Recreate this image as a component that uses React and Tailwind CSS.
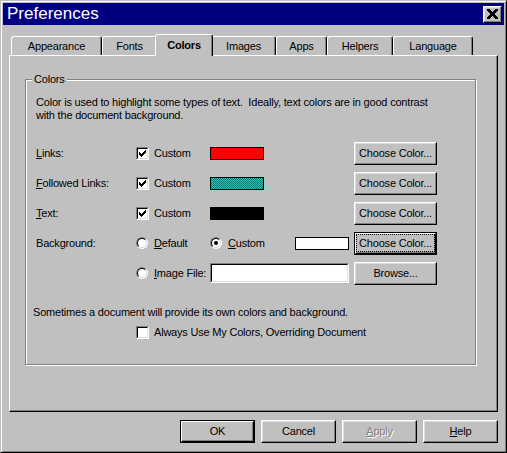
import React from "react";

const CHECK_PATH =
  "M7 1h1v1h-1zM6 2h2v1h-2zM1 3h1v1h-1zM5 3h3v1h-3zM1 4h2v1h-2zM4 4h3v1h-3zM1 5h5v1h-5zM2 6h3v1h-3zM3 7h1v1h-1z";

function Check({ checked }) {
  return (
    <span className="block w-[13px] h-[13px] shrink-0 border border-t-[#808080] border-l-[#808080] border-b-white border-r-white">
      <span className="block w-[11px] h-[11px] border border-t-black border-l-black border-b-[#dfdfdf] border-r-[#dfdfdf] bg-white">
        {checked && (
          <svg width="9" height="9" viewBox="0 0 9 9" className="block" shapeRendering="crispEdges">
            <path d={CHECK_PATH} fill="#000" />
          </svg>
        )}
      </span>
    </span>
  );
}

function Radio({ checked }) {
  return (
    <span className="block w-[12px] h-[12px] shrink-0 rounded-full border border-t-[#808080] border-l-[#808080] border-b-white border-r-white">
      <span className="flex items-center justify-center w-[10px] h-[10px] rounded-full border border-t-black border-l-black border-b-[#dfdfdf] border-r-[#dfdfdf] bg-white">
        {checked && <span className="block w-[4px] h-[4px] rounded-full bg-black" />}
      </span>
    </span>
  );
}

function Btn({ children, className = "", isDefault, focus, disabled }) {
  if (isDefault) {
    return (
      <div className={"h-[23px] shrink-0 border border-black " + className}>
        <span className="flex items-center justify-center w-full h-full border border-t-white border-l-white border-b-black border-r-black shadow-[inset_-1px_-1px_0_#808080]">
          <span
            className={
              focus
                ? "px-[1px] leading-[14px] outline outline-1 outline-dotted outline-black outline-offset-[1px]"
                : ""
            }
          >
            {children}
          </span>
        </span>
      </div>
    );
  }
  return (
    <div className={"h-[23px] shrink-0 " + className}>
      <span className="flex items-center justify-center w-full h-full border border-t-white border-l-white border-b-black border-r-black shadow-[inset_-1px_-1px_0_#808080,inset_1px_1px_0_#dfdfdf]">
        <span className={disabled ? "text-[#808080] [text-shadow:1px_1px_0_#fff]" : ""}>{children}</span>
      </span>
    </div>
  );
}

function Swatch({ children, className = "" }) {
  return <div className={"w-[54px] h-[13px] border border-black " + className}>{children}</div>;
}

function Tab({ label, active, w }) {
  if (active) {
    return (
      <div
        className={
          "relative z-10 -mx-[2px] -mb-px h-[22px] flex items-center justify-center font-bold bg-[#c0c0c0] border-l border-t border-white border-r border-r-black rounded-t-[3px] shadow-[inset_-1px_0_0_#808080] " +
          w
        }
      >
        {label}
      </div>
    );
  }
  return (
    <div
      className={
        "h-[19px] flex items-center justify-center bg-[#c0c0c0] border-l border-t border-white border-r border-r-black rounded-t-[3px] shadow-[inset_-1px_0_0_#808080] " +
        w
      }
    >
      {label}
    </div>
  );
}

export default function App() {
  return (
    <div className="w-[507px] h-[453px] bg-[#c0c0c0] text-black text-[11px] leading-[13px] tracking-[-0.2px] font-['Liberation_Sans',Arial,sans-serif] border border-t-[#c0c0c0] border-l-[#c0c0c0] border-b-black border-r-black shadow-[inset_1px_1px_0_#fff,inset_-1px_-1px_0_#808080] p-[2px] flex flex-col select-none">
      {/* Title bar */}
      <div className="h-[22px] bg-[#000080] flex items-center justify-between pl-[4px] pr-[2px]">
        <span className="text-white text-[17px] leading-[20px] tracking-normal">Preferences</span>
        <div className="w-[19px] h-[17px] flex items-center justify-center border border-t-white border-l-white border-b-black border-r-black shadow-[inset_-1px_-1px_0_#808080,inset_1px_1px_0_#dfdfdf] bg-[#c0c0c0]">
          <svg width="11" height="10" viewBox="0 0 11 10" shapeRendering="crispEdges">
            <path
              d="M0 0h3l2.5 3l2.5-3h3v1l-3.5 4l3.5 4v1h-3l-2.5-3l-2.5 3h-3v-1l3.5-4l-3.5-4z"
              fill="#000"
            />
          </svg>
        </div>
      </div>

      {/* Tabs + panel */}
      <div className="mt-[9px] px-[6px] flex flex-col">
        <div className="flex items-end h-[21px] pl-[2px]">
          <Tab label="Appearance" w="w-[91px]" />
          <Tab label="Fonts" w="w-[55px]" />
          <Tab label="Colors" active w="w-[58px]" />
          <Tab label="Images" w="w-[65px]" />
          <Tab label="Apps" w="w-[51px]" />
          <Tab label="Helpers" w="w-[66px]" />
          <Tab label="Language" w="w-[80px]" />
        </div>

        <div className="h-[357px] border border-t-white border-l-white border-b-black border-r-black shadow-[inset_-1px_-1px_0_#808080] pl-[15px] pt-[23px]">
          {/* Group box */}
          <div className="relative w-[451px] h-[286px] border border-[#808080] shadow-[inset_1px_1px_0_#fff,1px_1px_0_#fff] pl-[10px] pt-[16px]">
            <span className="absolute -top-[7px] left-[6px] px-[2px] bg-[#c0c0c0]">Colors</span>

            <p>
              Color is used to highlight some types of text.{"\u00a0 "}Ideally, text colors are in good contrast
              <br />
              with the document background.
            </p>

            <div className="mt-[16px] flex flex-col">
              <div className="flex items-center h-[30px]">
                <div className="w-[100px]">
                  <span className="underline">L</span>inks:
                </div>
                <div className="w-[74px] flex items-center gap-[5px]">
                  <Check checked />
                  Custom
                </div>
                <div className="w-[144px]">
                  <Swatch className="bg-[#ff0000]" />
                </div>
                <Btn className="w-[83px]">Choose Color...</Btn>
              </div>

              <div className="flex items-center h-[30px]">
                <div className="w-[100px]">
                  <span className="underline">F</span>ollowed Links:
                </div>
                <div className="w-[74px] flex items-center gap-[5px]">
                  <Check checked />
                  Custom
                </div>
                <div className="w-[144px]">
                  <Swatch>
                    <svg width="52" height="11" className="block" shapeRendering="crispEdges">
                      <defs>
                        <pattern id="dither" width="2" height="2" patternUnits="userSpaceOnUse">
                          <rect width="2" height="2" fill="#008080" />
                          <rect width="1" height="1" fill="#60a8a8" />
                          <rect x="1" y="1" width="1" height="1" fill="#60a8a8" />
                        </pattern>
                      </defs>
                      <rect width="52" height="11" fill="url(#dither)" />
                    </svg>
                  </Swatch>
                </div>
                <Btn className="w-[83px]">Choose Color...</Btn>
              </div>

              <div className="flex items-center h-[30px]">
                <div className="w-[100px]">
                  <span className="underline">T</span>ext:
                </div>
                <div className="w-[74px] flex items-center gap-[5px]">
                  <Check checked />
                  Custom
                </div>
                <div className="w-[144px]">
                  <Swatch className="bg-black" />
                </div>
                <Btn className="w-[83px]">Choose Color...</Btn>
              </div>

              <div className="flex items-center h-[30px]">
                <div className="w-[100px]">Background:</div>
                <div className="w-[74px] flex items-center gap-[6px]">
                  <Radio />
                  <span>
                    <span className="underline">D</span>efault
                  </span>
                </div>
                <div className="w-[85px] flex items-center gap-[6px]">
                  <Radio checked />
                  <span>
                    <span className="underline">C</span>ustom
                  </span>
                </div>
                <div className="w-[59px]">
                  <Swatch className="bg-white" />
                </div>
                <Btn className="w-[83px]" isDefault focus>
                  Choose Color...
                </Btn>
              </div>

              <div className="flex items-center h-[30px]">
                <div className="w-[100px]" />
                <div className="w-[74px] flex items-center gap-[6px]">
                  <Radio />
                  <span>
                    <span className="underline">I</span>mage File:
                  </span>
                </div>
                <div className="w-[144px]">
                  <div className="w-[139px] h-[20px] border border-t-[#808080] border-l-[#808080] border-b-white border-r-white">
                    <div className="w-full h-full border border-t-black border-l-black border-b-[#dfdfdf] border-r-[#dfdfdf] bg-white" />
                  </div>
                </div>
                <Btn className="w-[83px]">Browse...</Btn>
              </div>
            </div>

            <p className="mt-[18px] -ml-[3px]">Sometimes a document will provide its own colors and background.</p>

            <div className="mt-[7px] flex items-center h-[13px]">
              <div className="w-[100px]" />
              <div className="flex items-center gap-[5px]">
                <Check />
                Always Use My Colors, Overriding Document
              </div>
            </div>
          </div>
        </div>

        {/* Bottom buttons */}
        <div className="mt-[8px] flex justify-end gap-[6px]">
          <Btn className="w-[75px]" isDefault>
            OK
          </Btn>
          <Btn className="w-[75px]">Cancel</Btn>
          <Btn className="w-[75px]" disabled>
            <span className="underline">A</span>pply
          </Btn>
          <Btn className="w-[75px]">
            <span className="underline">H</span>elp
          </Btn>
        </div>
      </div>
    </div>
  );
}
